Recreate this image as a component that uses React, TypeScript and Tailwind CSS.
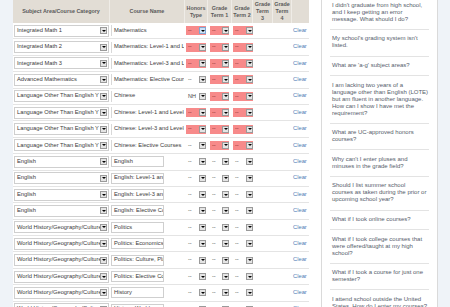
import React from "react";

type Sel = "pink" | "pinkf" | "white";
interface Row {
  s: string;
  c: string;
  boxed: boolean;
  h: Sel;
  hv?: string;
  t1: Sel;
  t2: Sel;
}

const LOTE = "Language Other Than English Y";
const WH = "World History/Geography/Cultures";

const rows: Row[] = [
  { s: "Integrated Math 1", c: "Mathematics", boxed: false, h: "pinkf", t1: "pink", t2: "pink" },
  { s: "Integrated Math 2", c: "Mathematics: Level-1 and Level-2", boxed: false, h: "pink", t1: "pink", t2: "pink" },
  { s: "Integrated Math 3", c: "Mathematics: Level-3 and Level-4", boxed: false, h: "pink", t1: "pink", t2: "pink" },
  { s: "Advanced Mathematics", c: "Mathematics: Elective Courses", boxed: false, h: "white", t1: "pink", t2: "pink" },
  { s: LOTE, c: "Chinese", boxed: false, h: "white", hv: "NH", t1: "pink", t2: "pink" },
  { s: LOTE, c: "Chinese: Level-1 and Level-2", boxed: false, h: "pink", t1: "pink", t2: "pink" },
  { s: LOTE, c: "Chinese: Level-3 and Level-4", boxed: false, h: "pink", t1: "pink", t2: "pink" },
  { s: LOTE, c: "Chinese: Elective Courses", boxed: false, h: "white", t1: "pink", t2: "pink" },
  { s: "English", c: "English", boxed: true, h: "white", t1: "white", t2: "white" },
  { s: "English", c: "English: Level-1 and Level-2", boxed: true, h: "white", t1: "white", t2: "white" },
  { s: "English", c: "English: Level-3 and Level-4", boxed: true, h: "white", t1: "white", t2: "white" },
  { s: "English", c: "English: Elective Courses", boxed: true, h: "white", t1: "white", t2: "white" },
  { s: WH, c: "Politics", boxed: true, h: "white", t1: "white", t2: "white" },
  { s: WH, c: "Politics: Economics", boxed: true, h: "white", t1: "white", t2: "white" },
  { s: WH, c: "Politics: Culture, Place", boxed: true, h: "white", t1: "white", t2: "white" },
  { s: WH, c: "Politics: Elective Courses", boxed: true, h: "white", t1: "white", t2: "white" },
  { s: WH, c: "History", boxed: true, h: "white", t1: "white", t2: "white" },
  { s: WH, c: "History: World", boxed: true, h: "white", t1: "white", t2: "white" },
];

const faqs: string[][] = [
  ["I didn't graduate from high school,", "and I keep getting an error", "message. What should I do?"],
  ["My school's grading system isn't", "listed."],
  ["What are 'a-g' subject areas?"],
  [
    "I am lacking two years of a",
    "language other than English (LOTE)",
    "but am fluent in another language.",
    "How can I show I have met the",
    "requirement?",
  ],
  ["What are UC-approved honors", "courses?"],
  ["Why can't I enter pluses and", "minuses in the grade field?"],
  ["Should I list summer school", "courses as taken during the prior or", "upcoming school year?"],
  ["What if I took online courses?"],
  ["What if I took college courses that", "were offered/taught at my high", "school?"],
  ["What if I took a course for just one", "semester?"],
  ["I attend school outside the United", "States. How do I enter my courses?"],
];

function Arrow({ focus }: { focus?: boolean }) {
  return (
    <div
      className={
        "flex h-[7px] w-[7px] shrink-0 items-center justify-center border " +
        (focus ? "border-[#7ea6d3] bg-[#cfe2f5]" : "border-[#9a9a9a] bg-[#e4e4e4]")
      }
    >
      <div className="h-0 w-0 border-l-[2px] border-r-[2px] border-t-[2.5px] border-l-transparent border-r-transparent border-t-black" />
    </div>
  );
}

function Select({ kind, value, w }: { kind: Sel; value?: string; w: string }) {
  const pink = kind !== "white";
  return (
    <div
      className={
        "flex h-[9px] shrink-0 items-center justify-between " +
        w +
        " " +
        (pink ? "bg-[#f78a8a]" : "bg-white")
      }
    >
      <span className={"pl-[2px] text-[5.5px] leading-none " + (pink ? "text-[#7a2020]" : "text-[#444]")}>
        {value ?? "--"}
      </span>
      <Arrow focus={kind === "pinkf"} />
    </div>
  );
}

function TableRow({ r }: { r: Row }) {
  return (
    <div className="flex h-[16.4px] shrink-0 items-center border-b border-[#e4e4e4] pl-[1px]">
      <div className="flex h-[12px] w-[95px] shrink-0 items-center border border-[#cfcfcf] bg-white pr-[1px]">
        <span className="block min-w-0 flex-1 overflow-hidden whitespace-nowrap pl-[2px] text-[5.75px] leading-none text-[#3a3a3a]">
          {r.s}
        </span>
        <Arrow />
      </div>
      <div className="ml-[2px] flex w-[75px] shrink-0 items-center">
        {r.boxed ? (
          <div className="flex h-[11px] w-[53px] items-center border border-[#cfcfcf] bg-white">
            <span className="block w-full overflow-hidden whitespace-nowrap pl-[2px] text-[5.75px] leading-none text-[#3a3a3a]">
              {r.c}
            </span>
          </div>
        ) : (
          <div className="flex h-[11px] w-[73px] items-center border-l border-[#d8d8d8]">
            <span className="block w-full overflow-hidden whitespace-nowrap pl-[2px] text-[5.75px] leading-none text-[#3a3a3a]">
              {r.c}
            </span>
          </div>
        )}
      </div>
      <Select kind={r.h} value={r.hv} w="w-[20px]" />
      <div className="ml-[4px]">
        <Select kind={r.t1} w="w-[19px]" />
      </div>
      <div className="ml-[4px]">
        <Select kind={r.t2} w="w-[20px]" />
      </div>
      <span className="ml-[40px] text-[5.75px] leading-none text-[#4d7db5]">Clear</span>
    </div>
  );
}

function HeadCell({ w, lines, last }: { w: string; lines: string[]; last?: boolean }) {
  return (
    <div
      className={
        "flex h-full shrink-0 flex-col items-center justify-center text-center " +
        w +
        (last ? "" : " border-r border-[#efece7]")
      }
    >
      {lines.map((l, i) => (
        <span key={i} className="whitespace-nowrap text-[5.4px] font-bold leading-[7px] text-[#5a5a5a]">
          {l}
        </span>
      ))}
    </div>
  );
}

export default function App() {
  return (
    <div className="flex h-[307px] w-[450px] overflow-hidden bg-[#eff3f8] font-['Liberation_Sans',Arial,sans-serif]">
      <div className="ml-[13px] flex h-full w-[425px] shrink-0 bg-white">
        {/* table */}
        <div className="flex w-[296px] shrink-0 flex-col">
          <div className="flex h-[23px] shrink-0 bg-[#e2ddd5]">
            <HeadCell w="w-[97px]" lines={["Subject Area/Course Category"]} />
            <HeadCell w="w-[75px]" lines={["Course Name"]} />
            <HeadCell w="w-[23px]" lines={["Honors", "Type"]} />
            <HeadCell w="w-[24px]" lines={["Grade", "Term 1"]} />
            <HeadCell w="w-[21px]" lines={["Grade", "Term 2"]} />
            <HeadCell w="w-[20px]" lines={["Grade", "Term", "3"]} />
            <HeadCell w="w-[19px]" lines={["Grade", "Term", "4"]} />
            <HeadCell w="w-[17px]" lines={[""]} last />
          </div>
          {rows.map((r, i) => (
            <TableRow key={i} r={r} />
          ))}
        </div>
        {/* spacer */}
        <div className="w-[12px] shrink-0" />
        {/* FAQ panel */}
        <div className="flex w-[117px] shrink-0 flex-col border-x border-[#dadada] px-[8px]">
          <div className="-mt-[3.5px] flex flex-col">
            {faqs.map((lines, i) => (
              <div key={i} className="border-b border-[#e3e3e3] pb-[6.3px] pl-[2px] pt-[5.3px]">
                {lines.map((l, j) => (
                  <div key={j} className="whitespace-nowrap text-[6px] leading-[7px] text-[#56606c]">
                    {l}
                  </div>
                ))}
              </div>
            ))}
          </div>
        </div>
      </div>
    </div>
  );
}
